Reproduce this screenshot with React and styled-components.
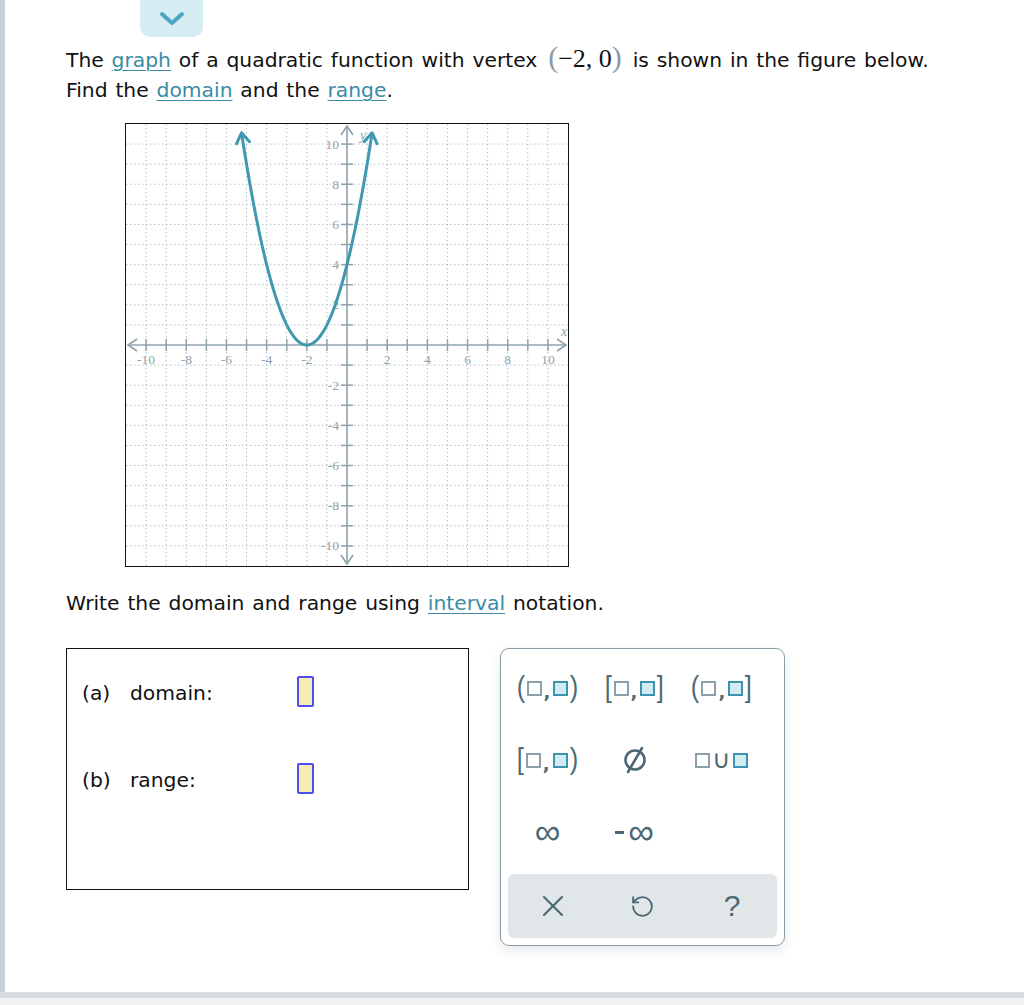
import React from "react";
import styled, { createGlobalStyle } from "styled-components";
import { X, RotateCcw } from "lucide-react";

const GlobalStyle = createGlobalStyle`
  html, body { margin: 0; padding: 0; background: #fff; }
  body { font-family: "DejaVu Sans", Verdana, sans-serif; color: #111; }
`;

const Page = styled.div`
  display: flex;
  min-height: 1005px;
  flex-direction: column;
`;

const Top = styled.div`
  display: flex;
  flex: 1;
`;

const LeftBar = styled.div`
  width: 5px;
  background: #c7d0d6;
  flex-shrink: 0;
`;

const Main = styled.div`
  flex: 1;
  padding-left: 61px;
  display: flex;
  flex-direction: column;
`;

const Tab = styled.div`
  margin-left: 74px;
  width: 63px;
  height: 37px;
  background: #d5edf3;
  border-radius: 0 0 10px 10px;
  display: flex;
  align-items: center;
  justify-content: center;
`;

const Text = styled.div`
  font-size: 20.3px;
  line-height: 30px;
  word-spacing: 1.4px;
  margin-top: ${(p) => p.$mt || 0}px;
`;

const Link = styled.span`
  color: #3a8ba4;
  text-decoration: underline;
  text-underline-offset: 3px;
  text-decoration-thickness: 1px;
`;

const MathExpr = styled.span`
  font-family: "Liberation Serif", "Times New Roman", serif;
  font-size: 26px;
  word-spacing: 0;
  margin: 0 3px;
`;

const MathParen = styled.span`
  color: #8a9ba5;
  font-size: 30px;
`;

const GraphBox = styled.div`
  margin-top: 18px;
  margin-left: 59px;
  width: 442px;
  height: 442px;
  border: 1px solid #111;
  background: #fff;
`;

const AnswerRow = styled.div`
  display: flex;
  gap: 31px;
  margin-top: 30px;
  align-items: flex-start;
`;

const AnswerBox = styled.div`
  box-sizing: border-box;
  width: 403px;
  height: 242px;
  border: 1px solid #111;
  padding: 27px 0 0 15px;
  display: flex;
  flex-direction: column;
  gap: 56px;
`;

const AnswerLine = styled.div`
  display: grid;
  grid-template-columns: 48px 167px auto;
  align-items: center;
  height: 31px;
  font-size: 20.3px;
`;

const Label = styled.span`
  padding-top: 3px;
`;

const Blank = styled.span`
  display: block;
  width: 17px;
  height: 31px;
  box-sizing: border-box;
  border: 2px solid #4f4ff0;
  border-radius: 2px;
  background: #f7ebb4;
`;

const Keypad = styled.div`
  width: 285px;
  height: 298px;
  box-sizing: border-box;
  border: 1px solid #8a9ca5;
  border-radius: 9px;
  box-shadow: 0 5px 12px rgba(60, 80, 90, 0.12);
  padding: 3px 7px 7px 2px;
  display: flex;
  flex-direction: column;
`;

const KeyGrid = styled.div`
  display: grid;
  grid-template-columns: repeat(3, 87px);
  grid-auto-rows: 72px;
  padding-left: 1px;
`;

const Key = styled.div`
  display: flex;
  align-items: center;
  justify-content: center;
  color: #4b6874;
`;

const Glyph = styled.span`
  display: inline-flex;
  align-items: center;
  height: 30px;
`;

const KParen = styled.span`
  font-family: "Liberation Sans", Arial, sans-serif;
  font-size: 30px;
  line-height: 30px;
  color: #4e6b77;
  transform: scaleX(0.85);
  margin-top: -3px;
`;

const Comma = styled.span`
  font-family: "DejaVu Sans", sans-serif;
  font-size: 18px;
  line-height: 18px;
  color: #4e6b77;
  margin: 8px 2px 0 1px;
  font-weight: bold;
`;

const Sq = styled.span`
  display: inline-block;
  width: 15px;
  height: 15px;
  box-sizing: border-box;
  border: 2px solid ${(p) => (p.$active ? "#3d94b0" : "#8ba0aa")};
  background: ${(p) => (p.$active ? "#d3ecf3" : "#fff")};
  margin: 0 1px;
`;

const Sym = styled.span`
  font-family: "Liberation Sans", Arial, sans-serif;
  font-size: ${(p) => p.$size || 30}px;
  line-height: 30px;
  color: #4b6874;
`;

const Cup = styled.span`
  font-family: "DejaVu Sans", sans-serif;
  font-size: 25px;
  line-height: 30px;
  color: #4b6874;
  margin: 0 1px;
`;

const Minus = styled.span`
  display: inline-block;
  width: 9px;
  height: 3px;
  background: #4b6874;
  margin-right: 4px;
`;

const ToolBar = styled.div`
  margin-top: 6px;
  margin-left: 5px;
  height: 64px;
  background: #e1e6e9;
  border-radius: 6px;
  display: grid;
  grid-template-columns: repeat(3, 1fr);
  align-items: center;
  justify-items: center;
`;

const ToolIcon = styled.div`
  color: #4b6874;
  display: flex;
  align-items: center;
  justify-content: center;
`;

const Question = styled.span`
  font-family: "Liberation Sans", Arial, sans-serif;
  font-size: 30px;
  color: #4b6874;
`;

const BottomBand = styled.div`
  height: 13px;
  border-top: 6px solid #d5dcdf;
  background: #f0f2f3;
  box-sizing: border-box;
`;

const U = 442 / 22;
const px = (x) => (x + 11) * U;
const py = (y) => (11 - y) * U;

const GRID = "#a9bac3";
const AXIS = "#8fa3ad";
const CURVE = "#4098b2";

function arrowWings(tx, ty, dx, dy, L = 12, ang = 33) {
  const n = Math.hypot(dx, dy);
  dx /= n;
  dy /= n;
  const a = (ang * Math.PI) / 180;
  const w = (s) => {
    const c = Math.cos(s * a);
    const sn = Math.sin(s * a);
    const rx = dx * c - dy * sn;
    const ry = dx * sn + dy * c;
    return [tx - L * rx, ty - L * ry];
  };
  const [ax, ay] = w(1);
  const [bx, by] = w(-1);
  return `${ax},${ay} ${tx},${ty} ${bx},${by}`;
}

function Graph() {
  const ints = [];
  for (let i = -10; i <= 10; i++) ints.push(i);
  const x0 = px(0);
  const y0 = py(0);
  const pts = [];
  const xa = -5.25;
  const xb = 1.25;
  for (let i = 0; i <= 130; i++) {
    const x = xa + ((xb - xa) * i) / 130;
    const y = (x + 2) * (x + 2);
    pts.push(`${px(x).toFixed(2)},${py(y).toFixed(2)}`);
  }
  const leftTip = [px(xa), py((xa + 2) ** 2)];
  const rightTip = [px(xb), py((xb + 2) ** 2)];
  const leftDir = [-1, 2 * (xa + 2)];
  const rightDir = [1, -2 * (xb + 2)];
  const serif = '"Liberation Serif", "Times New Roman", serif';
  return (
    <svg width="442" height="442" viewBox="0 0 442 442">
      {ints.filter((i) => i !== 0).map((i) => (
        <g key={"g" + i}>
          <line x1={px(i)} y1={0} x2={px(i)} y2={442} stroke={GRID} strokeWidth="1" strokeDasharray="1.3 2.7" />
          <line x1={0} y1={py(i)} x2={442} y2={py(i)} stroke={GRID} strokeWidth="1" strokeDasharray="1.3 2.7" />
        </g>
      ))}
      <line x1={2} y1={y0} x2={440} y2={y0} stroke={AXIS} strokeWidth="1.6" />
      <line x1={x0} y1={2} x2={x0} y2={440} stroke={AXIS} strokeWidth="1.6" />
      <polyline points={`11,${y0 - 6} 2,${y0} 11,${y0 + 6}`} fill="none" stroke={AXIS} strokeWidth="1.6" />
      <polyline points={`431,${y0 - 6} 440,${y0} 431,${y0 + 6}`} fill="none" stroke={AXIS} strokeWidth="1.6" />
      <polyline points={`${x0 - 6},11 ${x0},2 ${x0 + 6},11`} fill="none" stroke={AXIS} strokeWidth="1.6" />
      <polyline points={`${x0 - 6},431 ${x0},440 ${x0 + 6},431`} fill="none" stroke={AXIS} strokeWidth="1.6" />
      {ints.filter((i) => i !== 0).map((i) => (
        <g key={"t" + i}>
          <line x1={px(i)} y1={y0 - 6} x2={px(i)} y2={y0 + 6} stroke={AXIS} strokeWidth="1.5" />
          <line x1={x0 - 6} y1={py(i)} x2={x0 + 6} y2={py(i)} stroke={AXIS} strokeWidth="1.5" />
        </g>
      ))}
      {ints.filter((i) => i !== 0 && i % 2 === 0).map((i) => (
        <g key={"l" + i} fontFamily={serif} fontSize="13.5" fill={AXIS}>
          <text x={px(i)} y={y0 + 19} textAnchor="middle">{i < 0 ? `-${-i}` : i}</text>
          <text x={x0 - 8} y={py(i) + 4.5} textAnchor="end">{i < 0 ? `-${-i}` : i}</text>
        </g>
      ))}
      <text x={435} y={212} fontFamily={serif} fontStyle="italic" fontSize="14" fill={AXIS}>x</text>
      <text x={234} y={16} fontFamily={serif} fontStyle="italic" fontSize="14" fill={AXIS}>y</text>
      <polyline points={pts.join(" ")} fill="none" stroke={CURVE} strokeWidth="3" strokeLinejoin="round" />
      <polyline points={arrowWings(leftTip[0], leftTip[1], leftDir[0], leftDir[1])} fill="none" stroke={CURVE} strokeWidth="3" strokeLinecap="round" strokeLinejoin="round" />
      <polyline points={arrowWings(rightTip[0], rightTip[1], rightDir[0], rightDir[1])} fill="none" stroke={CURVE} strokeWidth="3" strokeLinecap="round" strokeLinejoin="round" />
    </svg>
  );
}

function Interval({ open, close }) {
  return (
    <Key>
      <Glyph>
        <KParen>{open}</KParen>
        <Sq />
        <Comma>,</Comma>
        <Sq $active />
        <KParen>{close}</KParen>
      </Glyph>
    </Key>
  );
}

function EmptySet() {
  return (
    <svg width="28" height="30" viewBox="0 0 28 30">
      <circle cx="14" cy="15" r="9.5" fill="none" stroke="#4b6874" strokeWidth="2.6" />
      <line x1="7" y1="27" x2="21" y2="3" stroke="#4b6874" strokeWidth="2.6" strokeLinecap="round" />
    </svg>
  );
}

export default function App() {
  return (
    <Page>
      <GlobalStyle />
      <Top>
        <LeftBar />
        <Main>
          <Tab>
            <svg width="26" height="16" viewBox="0 0 26 16">
              <polyline points="3,3 13,12 23,3" fill="none" stroke="#4aa6c3" strokeWidth="4" strokeLinecap="round" strokeLinejoin="round" />
            </svg>
          </Tab>
          <Text $mt={5}>
            The <Link>graph</Link> of a quadratic function with vertex{" "}
            <MathExpr>
              <MathParen>(</MathParen>−2, 0<MathParen>)</MathParen>
            </MathExpr>{" "}
            is shown in the figure below.
          </Text>
          <Text>
            Find the <Link>domain</Link> and the <Link>range</Link>.
          </Text>
          <GraphBox>
            <Graph />
          </GraphBox>
          <Text $mt={21}>
            Write the domain and range using <Link>interval</Link> notation.
          </Text>
          <AnswerRow>
            <AnswerBox>
              <AnswerLine>
                <Label>(a)</Label>
                <Label>domain:</Label>
                <Blank />
              </AnswerLine>
              <AnswerLine>
                <Label>(b)</Label>
                <Label>range:</Label>
                <Blank />
              </AnswerLine>
            </AnswerBox>
            <Keypad>
              <KeyGrid>
                <Interval open="(" close=")" />
                <Interval open="[" close="]" />
                <Interval open="(" close="]" />
                <Interval open="[" close=")" />
                <Key>
                  <EmptySet />
                </Key>
                <Key>
                  <Glyph>
                    <Sq />
                    <Cup>∪</Cup>
                    <Sq $active />
                  </Glyph>
                </Key>
                <Key>
                  <Sym $size={36}>∞</Sym>
                </Key>
                <Key>
                  <Glyph>
                    <Minus />
                    <Sym $size={36}>∞</Sym>
                  </Glyph>
                </Key>
              </KeyGrid>
              <ToolBar>
                <ToolIcon>
                  <X size={36} strokeWidth={1.4} />
                </ToolIcon>
                <ToolIcon>
                  <RotateCcw size={25} strokeWidth={1.8} />
                </ToolIcon>
                <ToolIcon>
                  <Question>?</Question>
                </ToolIcon>
              </ToolBar>
            </Keypad>
          </AnswerRow>
        </Main>
      </Top>
      <BottomBand />
    </Page>
  );
}
